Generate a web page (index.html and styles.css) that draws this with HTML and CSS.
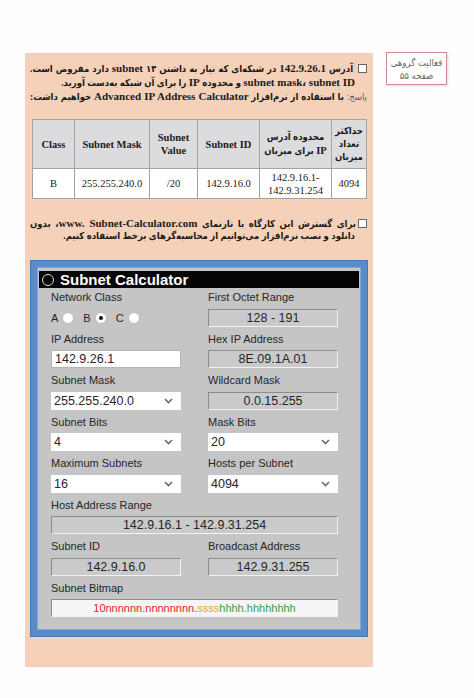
FILE: index.html
```html
<!DOCTYPE html>
<html lang="fa">
<head>
  <meta charset="UTF-8" />
  <meta name="viewport" content="width=device-width, initial-scale=1.0"/>
  <title>فعالیت گروهی - Subnet Calculator</title>
  <link rel="stylesheet" href="styles.css">
</head>
<body>
  <div class="page">
    <div class="sheet" dir="rtl">
      <p class="task">
        <span class="line full"><span class="box"></span> آدرس <span class="en">142.9.26.1</span> در شبکه‌ای که نیاز به داشتن ۱۴ <span class="en">subnet</span> دارد مفروض است.</span>
        <span class="line indent"><span class="en">subnet mask، subnet ID</span> و محدوده <span class="en">IP</span> را برای آن شبکه به‌دست آورید.</span>
        <span class="line full"><span class="muted">پاسخ:</span> با استفاده از نرم‌افزار <span class="en">Advanced IP Address Calculator</span> خواهیم داشت:</span>
      </p>

      <table class="result">
        <colgroup>
          <col style="width:35px"><col style="width:72px"><col style="width:62px">
          <col style="width:48px"><col style="width:75px"><col style="width:42px">
        </colgroup>
        <tr>
          <th class="fa">حداکثر<br>تعداد<br>میزبان</th>
          <th class="fa">محدوده آدرس<br><span class="en">IP</span> برای میزبان</th>
          <th>Subnet ID</th>
          <th>Subnet<br>Value</th>
          <th>Subnet Mask</th>
          <th>Class</th>
        </tr>
        <tr>
          <td>4094</td>
          <td>142.9.16.1-<br>142.9.31.254</td>
          <td>142.9.16.0</td>
          <td>/20</td>
          <td>255.255.240.0</td>
          <td>B</td>
        </tr>
      </table>

      <p class="task second">
        <span class="line full"><span class="box"></span>برای گسترش این کارگاه با تارنمای <span class="en">www. Subnet-Calculator.com</span>، بدون</span>
        <span class="line indent">دانلود و نصب نرم‌افزار می‌توانیم از محاسبه‌گرهای برخط استفاده کنیم.</span>
      </p>

      <div class="calc" dir="ltr">
        <div class="calc-title"><span class="dot"></span>Subnet Calculator</div>
        <div class="calc-body">
          <div class="cell">
            <div class="label">Network Class</div>
            <div class="radios">
              A <span class="radio"></span>
              B <span class="radio on"></span>
              C <span class="radio"></span>
            </div>
          </div>
          <div class="cell">
            <div class="label">First Octet Range</div>
            <div class="out">128 - 191</div>
          </div>

          <div class="cell">
            <div class="label">IP Address</div>
            <div class="in">142.9.26.1</div>
          </div>
          <div class="cell">
            <div class="label">Hex IP Address</div>
            <div class="out">8E.09.1A.01</div>
          </div>

          <div class="cell">
            <div class="label">Subnet Mask</div>
            <div class="sel">255.255.240.0 <svg width="9" height="6" viewBox="0 0 9 6"><polyline points="1,1 4.5,4.5 8,1" /></svg></div>
          </div>
          <div class="cell">
            <div class="label">Wildcard Mask</div>
            <div class="out">0.0.15.255</div>
          </div>

          <div class="cell">
            <div class="label">Subnet Bits</div>
            <div class="sel">4 <svg width="9" height="6" viewBox="0 0 9 6"><polyline points="1,1 4.5,4.5 8,1" /></svg></div>
          </div>
          <div class="cell">
            <div class="label">Mask Bits</div>
            <div class="sel">20 <svg width="9" height="6" viewBox="0 0 9 6"><polyline points="1,1 4.5,4.5 8,1" /></svg></div>
          </div>

          <div class="cell">
            <div class="label">Maximum Subnets</div>
            <div class="sel">16 <svg width="9" height="6" viewBox="0 0 9 6"><polyline points="1,1 4.5,4.5 8,1" /></svg></div>
          </div>
          <div class="cell">
            <div class="label">Hosts per Subnet</div>
            <div class="sel">4094 <svg width="9" height="6" viewBox="0 0 9 6"><polyline points="1,1 4.5,4.5 8,1" /></svg></div>
          </div>

          <div class="cell wide">
            <div class="label">Host Address Range</div>
            <div class="out">142.9.16.1 - 142.9.31.254</div>
          </div>

          <div class="cell">
            <div class="label">Subnet ID</div>
            <div class="out">142.9.16.0</div>
          </div>
          <div class="cell">
            <div class="label">Broadcast Address</div>
            <div class="out">142.9.31.255</div>
          </div>

          <div class="cell wide">
            <div class="label">Subnet Bitmap</div>
            <div class="out bitmap"><span class="net">10nnnnnn.nnnnnnnn.</span><span class="sub">ssss</span><span class="host">hhhh.hhhhhhhh</span></div>
          </div>
        </div>
      </div>
    </div>

    <div class="badge" dir="rtl">فعالیت گروهی<br>صفحه ۵۵</div>
  </div>
</body>
</html>
```

FILE: styles.css
```css
body {
  margin: 0;
  background: #fefefe;
  font-family: "Liberation Serif", "DejaVu Sans Condensed", "DejaVu Sans", serif;
  color: #1a1a1a;
}

.page {
  display: flex;
  align-items: flex-start;
  padding: 53px 0 0 25px;
}

/* peach worksheet */
.sheet {
  width: 348px;
  box-sizing: border-box;
  background: #f6d1b9;
  padding: 8px 6px 31px 5px;
}

.task {
  margin: 0;
  font-size: 9.5px;
  font-weight: bold;
  line-height: 14px;
}

.en {
  font-size: 11px;
}

.line {
  display: block;
  height: 14px;
  white-space: nowrap;
}

.line.full {
  text-align: justify;
  text-align-last: justify;
}

.line.indent {
  padding-right: 12px;
}

.muted {
  font-weight: normal;
  color: #555a66;
}

.box {
  display: inline-block;
  width: 7px;
  height: 7px;
  border: 1px solid #666;
  background: #fff;
  vertical-align: -1px;
  margin-left: 2px;
}

.second {
  line-height: 13px;
  margin-top: 18px;
}

.second .line {
  height: 13px;
}

/* answer table */
.result {
  width: 334px;
  margin-top: 16px;
  border-collapse: collapse;
  table-layout: fixed;
  background: #fff;
  font-size: 10.5px;
}

.result th, .result td {
  border: 1px solid #a3a3a3;
  text-align: center;
  padding: 0;
}

.result th {
  background: #dcdcdf;
  height: 48px;
  line-height: 13px;
  font-weight: bold;
}

.result th.fa {
  font-size: 9.5px;
}

.result th .en {
  font-size: 10.5px;
}

.result td {
  height: 29px;
  line-height: 13px;
  direction: ltr;
}

/* subnet calculator window */
.calc {
  width: 336px;
  box-sizing: border-box;
  margin: 18px 0 0 -1px;
  border: 6px solid #5a8cc8;
  box-shadow: 0 0 0 1px #4477b4, inset 0 0 0 1px #7ea6d6;
  background: #c5c5c5;
  padding: 4px 2px 13px;
  font-family: "Liberation Sans", Arial, sans-serif;
  color: #262626;
}

.calc-title {
  display: flex;
  align-items: center;
  gap: 6px;
  height: 17px;
  padding-left: 3px;
  background: #050505;
  color: #fff;
  font-size: 15px;
  font-weight: bold;
}

.dot {
  width: 10px;
  height: 10px;
  border: 1px solid #d8d8d8;
  border-radius: 50%;
}

.calc-body {
  display: grid;
  grid-template-columns: 130px 130px;
  column-gap: 27px;
  row-gap: 6px;
  padding: 3px 0 0 12px;
}

.wide {
  grid-column: 1 / -1;
}

.label {
  font-size: 11px;
  line-height: 13.5px;
  margin-bottom: 4px;
}

.radios {
  display: flex;
  align-items: center;
  gap: 4px;
  height: 18px;
  font-size: 11px;
}

.radio {
  width: 10px;
  height: 10px;
  border: 1px solid #bdbdbd;
  border-radius: 50%;
  background: #fff;
  margin-right: 5px;
  position: relative;
}

.radio.on::after {
  content: "";
  position: absolute;
  left: 3px;
  top: 3px;
  width: 4px;
  height: 4px;
  border-radius: 50%;
  background: #111;
}

.out, .in, .sel {
  height: 18px;
  box-sizing: border-box;
  font-size: 12.5px;
  line-height: 16px;
}

.out {
  background: #cacaca;
  border: 1px solid;
  border-color: #8c8c8c #f2f2f2 #f2f2f2 #8c8c8c;
  text-align: center;
}

.in {
  background: #fff;
  border: 1px solid #b5b5b5;
  padding-left: 3px;
}

.sel {
  display: flex;
  justify-content: space-between;
  align-items: center;
  background: #fff;
  padding: 0 8px 0 3px;
}

.sel polyline {
  fill: none;
  stroke: #6a6a6a;
  stroke-width: 1.6;
}

.bitmap {
  background: #f5f5f5;
  font-size: 11px;
}

.net { color: #e0262a; }
.sub { color: #e0a526; }
.host { color: #3c9a3a; }

/* page badge */
.badge {
  width: 61px;
  height: 33px;
  box-sizing: border-box;
  margin: -1px 0 0 13px;
  border: 1px solid #cf8c8c;
  box-shadow: 1px 1px 2px rgba(0,0,0,0.15);
  background: #fff;
  font-family: "DejaVu Sans Condensed", "DejaVu Sans", sans-serif;
  font-size: 9.5px;
  line-height: 13px;
  color: #666;
  text-align: center;
  padding-top: 3px;
}
```
